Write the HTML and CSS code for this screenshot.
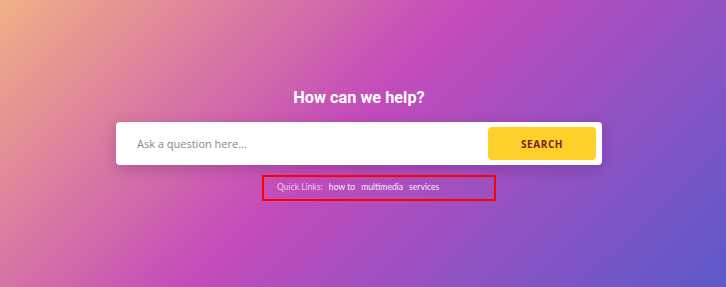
FILE: index.html
```html
<!DOCTYPE html>
<html lang="en">
<head>
    <meta charset="UTF-8">
    <meta name="viewport" content="width=device-width, initial-scale=1.0">
    <title>Help Center</title>
    <link rel="stylesheet" href="styles.css">
</head>
<body>
<div class="hero">
    <h2 class="hero_title">How can we help?</h2>
    <form class="search" onsubmit="return false">
        <input type="text" class="search_input" placeholder="Ask a question here...">
        <button class="search_button">SEARCH</button>
    </form>
    <div class="quick_links">
        <span class="quick_label">Quick Links:</span>
        <a href="#">how to</a>
        <a href="#">multimedia</a>
        <a href="#">services</a>
    </div>
</div>
</body>
</html>
```

FILE: styles.css
```css
html, body {
    height: 100%;
}

body {
    margin: 0;
    padding: 0;
    font-family: "Open Sans", Arial, sans-serif;
    background: linear-gradient(135deg, #f2b084 0%, #c34bbb 47%, #5c5acb 100%);
}

.hero {
    display: flex;
    flex-direction: column;
    align-items: center;
    padding-top: 87px;
    padding-right: 8px;
}

.hero_title {
    margin: 0 0 13px;
    font-family: Roboto, Arial, sans-serif;
    font-size: 16.3px;
    font-weight: 700;
    color: #fff;
    line-height: 22px;
}

.search {
    display: flex;
    align-items: center;
    width: 486px;
    height: 43px;
    box-sizing: border-box;
    padding: 5px 6px 5px 21px;
    background-color: #fff;
    border-radius: 4px;
    box-shadow: 0 4px 14px rgba(60, 20, 80, 0.25);
}

.search_input {
    flex: 1;
    border: none;
    outline: none;
    padding: 0;
    font-family: "Open Sans", Arial, sans-serif;
    font-size: 11px;
    color: #555;
    background: transparent;
}

.search_input::placeholder {
    color: #888;
}

.search_button {
    width: 108px;
    height: 33px;
    border: none;
    border-radius: 4px;
    background-color: #ffd02a;
    color: #7a1c16;
    font-family: "Open Sans", Arial, sans-serif;
    font-size: 10px;
    font-weight: 700;
    letter-spacing: 0.6px;
}

.quick_links {
    display: flex;
    align-items: center;
    gap: 6px;
    margin-top: 10px;
    margin-left: 40px;
    width: 234px;
    height: 26px;
    box-sizing: border-box;
    padding-left: 13px;
    padding-bottom: 2px;
    border: 2px solid #ff0000;
    font-family: Lato, Arial, sans-serif;
    font-size: 8.6px;
}

.quick_label {
    color: rgba(255, 255, 255, 0.72);
}

.quick_links a {
    color: rgba(255, 255, 255, 0.92);
    text-decoration: none;
}
```
